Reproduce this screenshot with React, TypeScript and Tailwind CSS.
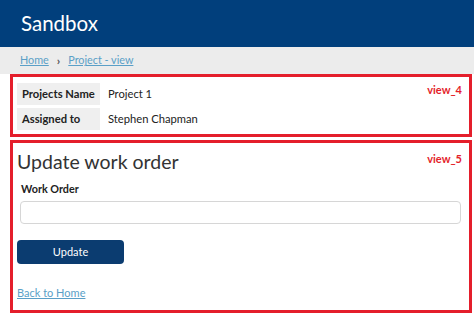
import React from "react";

const rows = [
    { label: "Projects Name", value: "Project 1" },
    { label: "Assigned to", value: "Stephen Chapman" },
];

const App: React.FC = () => {
    return (
        <div className="h-[316px] w-[474px] overflow-hidden bg-white font-['Lato',sans-serif] text-[#222]">
            <header className="flex h-[47px] items-center bg-[#013f7c] px-[21px]">
                <span className="text-[20.5px] text-white">Sandbox</span>
            </header>

            <nav className="flex h-[27px] items-center gap-[8px] bg-[#ececec] px-[20px] text-[10.8px]">
                <a href="#" className="text-[#5a9fc7] underline">Home</a>
                <span className="text-[12px] font-bold text-[#555]">›</span>
                <a href="#" className="text-[#5a9fc7] underline">Project - view</a>
            </nav>

            <section className="relative ml-[10px] w-[462px] border-[3px] border-[#e41e2b] px-[4px] pb-[4px] pt-[6px]">
                <span className="absolute right-[7px] top-[5px] text-[11px] font-bold text-[#e41e2b]">view_4</span>
                <div className="flex flex-col gap-[3px] text-[11.2px]">
                    {rows.map((r) => (
                        <div key={r.label} className="flex h-[22px] items-center">
                            <div className="flex h-full w-[83px] items-center whitespace-nowrap bg-[#efefef] pl-[5px] text-[11.2px] font-bold">{r.label}</div>
                            <div className="pl-[8px]">{r.value}</div>
                        </div>
                    ))}
                </div>
            </section>

            <section className="relative ml-[10px] mt-[3px] h-[173px] w-[462px] border-[3px] border-[#e41e2b] px-[4px] pt-[6px]">
                <span className="absolute right-[7px] top-[8px] text-[11px] font-bold text-[#e41e2b]">view_5</span>
                <h1 className="text-[19.5px] leading-[26px] text-[#333]">Update work order</h1>
                <label className="mt-[7px] block pl-[4px] text-[10.8px] font-bold leading-[14px]">Work Order</label>
                <input className="ml-[3px] mt-[5px] block h-[23px] w-[441px] rounded-[4px] border border-[#d6d6d6]" />
                <button className="mt-[16px] h-[24px] w-[107px] rounded-[4px] bg-[#0b3c70] text-[11px] text-white">
                    Update
                </button>
                <a href="#" className="mt-[21px] block text-[11px] leading-[16px] text-[#5a9fc7] underline">Back to Home</a>
            </section>
        </div>
    );
};

export default App;
